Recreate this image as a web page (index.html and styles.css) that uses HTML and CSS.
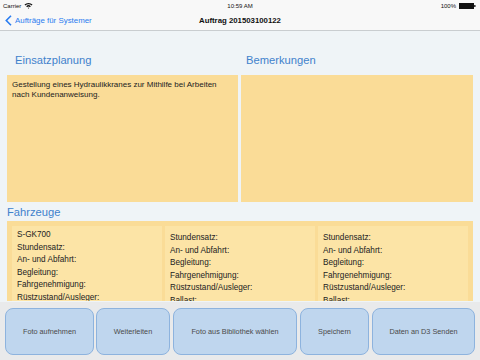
FILE: index.html
```html
<!DOCTYPE html>
<html lang="de">
<head>
<meta charset="utf-8">
<title>Auftrag 201503100122</title>
<link rel="stylesheet" href="styles.css">
</head>
<body>
<div class="app">
  <div class="statusbar">
    <div class="sb-left">Carrier
      <svg class="wifi" width="9" height="7" viewBox="0 0 9 7"><path d="M0.5 2.6 A5.6 5.6 0 0 1 8.5 2.6 L7.6 3.5 A4.3 4.3 0 0 0 1.4 3.5 Z M2.2 4.3 A3.2 3.2 0 0 1 6.8 4.3 L5.9 5.2 A2 2 0 0 0 3.1 5.2 Z M3.8 5.9 A1 1 0 0 1 5.2 5.9 L4.5 6.7 Z" fill="#111"/></svg>
    </div>
    <div class="sb-center">10:59 AM</div>
    <div class="sb-right">100%
      <svg width="17" height="6" viewBox="0 0 17 6"><rect x="0.5" y="0.5" width="14" height="5" fill="#111" stroke="#111" stroke-width="1"/><rect x="15.2" y="2" width="1.3" height="2" fill="#111"/></svg>
    </div>
  </div>
  <div class="navbar">
    <div class="back">
      <svg width="7" height="11" viewBox="0 0 7 11"><path d="M6 0.8 L1.3 5.5 L6 10.2" fill="none" stroke="#2a7cf0" stroke-width="1.6"/></svg>
      <span>Aufträge für Systemer</span>
    </div>
    <div class="title">Auftrag 201503100122</div>
  </div>
  <div class="content">
    <div class="top-grid">
      <div class="section">
        <h2 class="heading heading-indent">Einsatzplanung</h2>
        <div class="box">Gestellung eines Hydraulikkranes zur Mithilfe bei Arbeiten nach Kundenanweisung.</div>
      </div>
      <div class="section">
        <h2 class="heading heading-right">Bemerkungen</h2>
        <div class="box"></div>
      </div>
    </div>
    <h2 class="heading heading-fz">Fahrzeuge</h2>
    <div class="vehicles">
      <div class="card">
        <div class="line">S-GK700</div>
        <div class="line">Stundensatz:</div>
        <div class="line">An- und Abfahrt:</div>
        <div class="line">Begleitung:</div>
        <div class="line">Fahrgenehmigung:</div>
        <div class="line">Rüstzustand/Ausleger:</div>
        <div class="line">Ballast:</div>
      </div>
      <div class="card card-offset">
        <div class="line">Stundensatz:</div>
        <div class="line">An- und Abfahrt:</div>
        <div class="line">Begleitung:</div>
        <div class="line">Fahrgenehmigung:</div>
        <div class="line">Rüstzustand/Ausleger:</div>
        <div class="line">Ballast:</div>
      </div>
      <div class="card card-offset">
        <div class="line">Stundensatz:</div>
        <div class="line">An- und Abfahrt:</div>
        <div class="line">Begleitung:</div>
        <div class="line">Fahrgenehmigung:</div>
        <div class="line">Rüstzustand/Ausleger:</div>
        <div class="line">Ballast:</div>
      </div>
    </div>
  </div>
  <div class="toolbar">
    <button class="btn b1">Foto aufnehmen</button>
    <button class="btn b2">Weiterleiten</button>
    <button class="btn b3">Foto aus Bibliothek wählen</button>
    <button class="btn b4">Speichern</button>
    <button class="btn b5">Daten an D3 Senden</button>
  </div>
</div>
</body>
</html>
```

FILE: styles.css
```css
* { box-sizing: border-box; }
html, body { margin: 0; padding: 0; }
body {
  width: 480px;
  height: 360px;
  overflow: hidden;
  font-family: "Liberation Sans", Arial, sans-serif;
  background: #eff4f7;
  color: #222;
}
.app {
  width: 480px;
  height: 360px;
  display: flex;
  flex-direction: column;
  overflow: hidden;
}
.statusbar {
  height: 11px;
  background: #f8f8f8;
  display: flex;
  align-items: center;
  justify-content: space-between;
  font-size: 6px;
  color: #111;
  padding: 0 4px 0 3px;
  position: relative;
}
.sb-left, .sb-right { display: flex; align-items: center; gap: 3px; }
.sb-center {
  position: absolute;
  left: 0; right: 0;
  text-align: center;
}
.navbar {
  height: 20px;
  background: #f8f8f8;
  border-bottom: 1px solid #c9cdd0;
  display: flex;
  align-items: center;
  position: relative;
}
.back {
  display: flex;
  align-items: center;
  gap: 3px;
  padding-left: 5px;
  color: #2a7cf0;
  font-size: 7.9px;
}
.title {
  position: absolute;
  left: 0; right: 0;
  text-align: center;
  font-size: 7.8px;
  font-weight: bold;
  color: #111;
  pointer-events: none;
}
.content {
  flex: 1;
  padding: 0 7px;
  overflow: hidden;
}
.top-grid {
  display: grid;
  grid-template-columns: 231px 232px;
  column-gap: 3px;
  margin-top: 22px;
}
.heading {
  margin: 0;
  font-weight: normal;
  color: #3f82cc;
  font-size: 11.2px;
  line-height: 14px;
}
.heading-indent { padding-left: 8px; }
.heading-right { padding-left: 5px; }
.section .heading { margin-bottom: 8px; }
.box {
  background: #fadc97;
  height: 127px;
  padding: 5px 5px;
  font-size: 8px;
  line-height: 9.5px;
  color: #222;
}
.heading-fz {
  margin-top: 3px;
  margin-bottom: 2px;
}
.vehicles {
  background: #fadc97;
  height: 80px;
  padding: 5px 5px 0 5px;
  display: grid;
  grid-template-columns: 150px 150px 150px;
  column-gap: 3px;
  overflow: hidden;
}
.card {
  background: #fce4a6;
  padding: 3px 5px;
  font-size: 8.2px;
  color: #222;
}
.card-offset { padding-top: 6px; }
.line { height: 12.6px; line-height: 12.6px; white-space: nowrap; }
.toolbar {
  height: 58px;
  background: #e9eaeb;
  display: flex;
  gap: 3px;
  padding: 6px 5px 5px 5px;
  flex-shrink: 0;
}
.btn {
  font-family: "Liberation Sans", Arial, sans-serif;
  font-size: 7.3px;
  color: #4a4a4a;
  background: #bfd6ee;
  border: 1px solid #8db3de;
  border-radius: 8px;
  height: 47px;
  padding: 0;
}
.b1 { width: 89px; }
.b2 { width: 74px; margin-left: -1px; }
.b3 { width: 124px; }
.b4 { width: 69px; }
.b5 { width: 103px; }
```
